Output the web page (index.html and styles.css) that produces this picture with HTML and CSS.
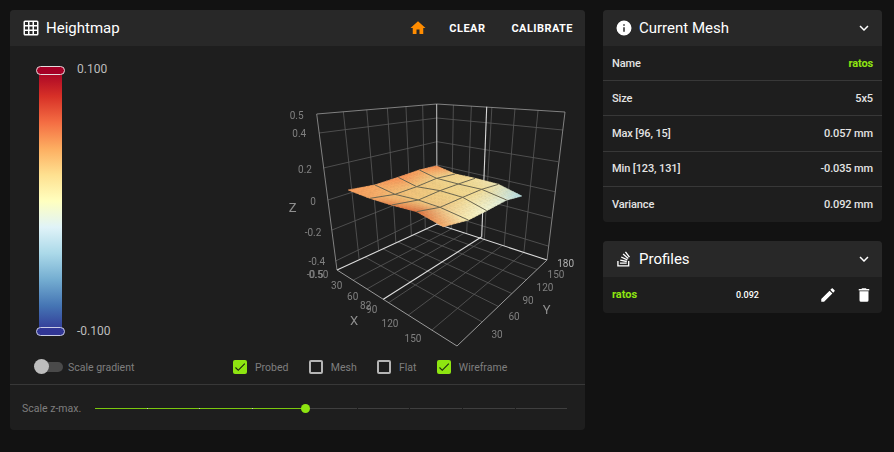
FILE: index.html
```html
<!DOCTYPE html>
<html lang="en">

<head>
  <meta charset="UTF-8">
  <meta name="viewport" content="width=device-width, initial-scale=1.0">
  <title>Heightmap</title>
  <link rel="stylesheet" href="styles.css">
</head>

<body>
  <div class="page">
    <div class="card card-main">
      <div class="card-head">
        <svg class="icon" viewBox="0 0 24 24"><path d="M10,4V8H14V4H10M16,4V8H20V4H16M16,10V14H20V10H16M16,16V20H20V16H16M14,20V16H10V20H14M8,20V16H4V20H8M8,14V10H4V14H8M8,8V4H4V8H8M10,14H14V10H10V14M4,2H20A2,2 0 0,1 22,4V20A2,2 0 0,1 20,22H4C2.92,22 2,21.1 2,20V4A2,2 0 0,1 4,2Z"/></svg>
        <span class="card-title">Heightmap</span>
        <svg class="icon icon-home" viewBox="0 0 24 24"><path d="M10,20V14H14V20H19V12H22L12,3L2,12H5V20H10Z"/></svg>
        <span class="head-btn btn-clear">CLEAR</span>
        <span class="head-btn btn-calibrate">CALIBRATE</span>
      </div>

      <div class="chart-row">
        <div class="legend">
          <div class="bar">
            <div class="handle handle-top"></div>
            <div class="handle handle-bottom"></div>
          </div>
          <div class="legend-labels">
            <span>0.100</span>
            <span>-0.100</span>
          </div>
        </div>
        <svg id="plot" class="plot" viewBox="280 90 300 260"></svg>
      </div>

      <div class="controls">
        <div class="toggle-wrap">
          <div class="toggle"><div class="toggle-thumb"></div></div>
          <span class="control-label">Scale gradient</span>
        </div>
        <div class="checks">
          <div class="check-item">
            <div class="check on"><svg viewBox="0 0 24 24"><path d="M21,7L9,19L3.5,13.5L4.91,12.09L9,16.17L19.59,5.59L21,7Z"/></svg></div>
            <span class="control-label">Probed</span>
          </div>
          <div class="check-item">
            <div class="check"></div>
            <span class="control-label">Mesh</span>
          </div>
          <div class="check-item">
            <div class="check"></div>
            <span class="control-label">Flat</span>
          </div>
          <div class="check-item">
            <div class="check on"><svg viewBox="0 0 24 24"><path d="M21,7L9,19L3.5,13.5L4.91,12.09L9,16.17L19.59,5.59L21,7Z"/></svg></div>
            <span class="control-label">Wireframe</span>
          </div>
        </div>
      </div>

      <div class="slider-row">
        <span class="control-label slider-label">Scale z-max.</span>
        <div class="slider">
          <div class="slider-seg active"></div>
          <div class="slider-seg active"></div>
          <div class="slider-seg active"></div>
          <div class="slider-seg active"></div>
          <div class="slider-seg"></div>
          <div class="slider-seg"></div>
          <div class="slider-seg"></div>
          <div class="slider-seg"></div>
          <div class="slider-seg"></div>
          <div class="slider-thumb"></div>
        </div>
      </div>
    </div>

    <div class="side">
      <div class="card">
        <div class="card-head">
          <svg class="icon" viewBox="0 0 24 24"><path d="M13,9H11V7H13M13,17H11V11H13M12,2A10,10 0 0,0 2,12A10,10 0 0,0 12,22A10,10 0 0,0 22,12A10,10 0 0,0 12,2Z"/></svg>
          <span class="card-title">Current Mesh</span>
          <svg class="icon icon-chevron" viewBox="0 0 24 24"><path d="M7.41,8.58L12,13.17L16.59,8.58L18,10L12,16L6,10L7.41,8.58Z"/></svg>
        </div>
        <div class="info-row"><span>Name</span><span class="green">ratos</span></div>
        <div class="info-row"><span>Size</span><span>5x5</span></div>
        <div class="info-row"><span>Max [96, 15]</span><span>0.057 mm</span></div>
        <div class="info-row"><span>Min [123, 131]</span><span>-0.035 mm</span></div>
        <div class="info-row"><span>Variance</span><span>0.092 mm</span></div>
      </div>

      <div class="card">
        <div class="card-head">
          <svg class="icon" viewBox="0 0 24 24"><path d="M17.36,20.2V14.82H19.15V22H3V14.82H4.8V20.2H17.36M6.77,14.32L7.14,12.56L15.93,14.41L15.56,16.17L6.77,14.32M7.93,10.11L8.69,8.5L16.83,12.28L16.07,13.9L7.93,10.11M10.19,6.12L11.34,4.74L18.24,10.5L17.09,11.87L10.19,6.12M14.64,1.87L20,9.08L18.56,10.15L13.2,2.94L14.64,1.87M6.59,18.41V16.61H15.57V18.41H6.59Z"/></svg>
          <span class="card-title">Profiles</span>
          <svg class="icon icon-chevron" viewBox="0 0 24 24"><path d="M7.41,8.58L12,13.17L16.59,8.58L18,10L12,16L6,10L7.41,8.58Z"/></svg>
        </div>
        <div class="profile-row">
          <span class="green profile-name">ratos</span>
          <span class="profile-value">0.092</span>
          <svg class="icon icon-edit" viewBox="0 0 24 24"><path d="M20.71,7.04C21.1,6.65 21.1,6 20.71,5.63L18.37,3.29C18,2.9 17.35,2.9 16.96,3.29L15.12,5.12L18.87,8.87M3,17.25V21H6.75L17.81,9.93L14.06,6.18L3,17.25Z"/></svg>
          <svg class="icon icon-delete" viewBox="0 0 24 24"><path d="M19,4H15.5L14.5,3H9.5L8.5,4H5V6H19M6,19A2,2 0 0,0 8,21H16A2,2 0 0,0 18,19V7H6V19Z"/></svg>
        </div>
      </div>
    </div>
  </div>

  <script src="plot.js"></script>
</body>

</html>
```

FILE: styles.css
```css
* {
  box-sizing: border-box;
}

html,
body {
  margin: 0;
  height: 100%;
  overflow: hidden;
  background: #121212;
  font-family: Roboto, "Liberation Sans", sans-serif;
  color: #fff;
}

.page {
  display: flex;
  gap: 18px;
  padding: 10px 12px 0 10px;
}

.card {
  background: #1e1e1e;
  border-radius: 4px;
  overflow: hidden;
}

.card-main {
  width: 575px;
  height: 420px;
}

.side {
  display: flex;
  flex-direction: column;
  gap: 19px;
  width: 279px;
}

.card-head {
  display: flex;
  align-items: center;
  height: 36px;
  padding: 0 12px;
  background: #282828;
}

.icon {
  flex: none;
  width: 18px;
  height: 18px;
  fill: #fff;
}

.card-title {
  margin-left: 6px;
  font-size: 15px;
}

.icon-home {
  margin-left: auto;
  fill: #ff8c00;
}

.head-btn {
  font-size: 11px;
  font-weight: 700;
  letter-spacing: 0.45px;
}

.btn-clear {
  margin-left: 22px;
}

.btn-calibrate {
  margin-left: 26px;
}

.icon-chevron {
  margin-left: auto;
  margin-right: -3px;
}

/* chart */

.chart-row {
  display: flex;
  height: 306px;
}

.legend {
  display: flex;
  height: 276px;
  margin: 16px 0 0 29px;
}

.bar {
  position: relative;
  width: 23px;
  height: 262px;
  margin-top: 8px;
  background: linear-gradient(#a50026, #d73027, #f46d43, #fdae61, #fee090, #ffffbf, #e0f3f8, #abd9e9, #74add1, #4575b4, #313695);
}

.handle {
  position: absolute;
  left: -3px;
  width: 29px;
  height: 9px;
  border: 1px solid #e6d9dc;
  border-radius: 5px;
}

.handle-top {
  top: -4px;
  background: #a50026;
}

.handle-bottom {
  bottom: -4px;
  background: #313695;
  border-color: #c9cce6;
}

.legend-labels {
  display: flex;
  flex-direction: column;
  justify-content: space-between;
  margin-left: 15px;
  font-size: 12px;
  line-height: 14px;
  color: #bdbdbd;
}

.plot {
  flex: none;
  width: 300px;
  height: 260px;
  margin: 44px 5px 0 auto;
  filter: blur(0.35px);
}

/* controls */

.controls {
  display: flex;
  align-items: center;
  height: 33px;
  padding: 0 0 2px 25px;
  border-bottom: 1px solid #383838;
}

.toggle-wrap {
  display: flex;
  align-items: center;
  width: 198px;
}

.toggle {
  position: relative;
  width: 28px;
  height: 10px;
  border-radius: 5px;
  background: #4a4a4a;
}

.toggle-thumb {
  position: absolute;
  top: -3px;
  left: -1px;
  width: 15px;
  height: 15px;
  border-radius: 50%;
  background: #bdbdbd;
}

.control-label {
  font-size: 10.5px;
  color: #7f7f7f;
}

.toggle-wrap .control-label {
  margin-left: 5px;
}

.checks {
  display: flex;
  gap: 20.3px;
}

.check-item {
  display: flex;
  align-items: center;
  gap: 8px;
}

.check {
  width: 14px;
  height: 14px;
  border: 2px solid #b5b5b5;
  border-radius: 2px;
}

.check.on {
  border: 0;
  background: #8ee511;
}

.check svg {
  display: block;
  width: 14px;
  height: 14px;
  fill: #1e2a10;
}

.slider-row {
  display: flex;
  align-items: center;
  height: 46px;
  padding-left: 12px;
}

.slider-label {
  width: 73px;
}

.slider {
  position: relative;
  display: flex;
  gap: 1px;
  width: 472px;
}

.slider-seg {
  flex: 1;
  height: 1px;
  background: #3f3f3f;
}

.slider-seg.active {
  background: #7ac70e;
  box-shadow: 1px 0 0 #c8d8a8;
}

.slider-thumb {
  position: absolute;
  top: -4px;
  left: 206px;
  width: 9px;
  height: 9px;
  border-radius: 50%;
  background: #8ee511;
}

/* side cards */

.info-row {
  display: flex;
  justify-content: space-between;
  align-items: center;
  height: 35.2px;
  padding: 0 9px;
  font-size: 11px;
  font-weight: 500;
  letter-spacing: -0.12px;
  color: #e4e4e4;
  border-bottom: 1px solid #383838;
}

.info-row:last-child {
  border-bottom: 0;
}

.green {
  color: #8ee511;
  font-weight: 700;
}

.profile-row {
  display: flex;
  align-items: center;
  height: 36px;
  padding: 0 9px;
  font-size: 11px;
}

.profile-name {
  width: 124px;
}

.profile-value {
  width: 83px;
  font-size: 9px;
  font-weight: 500;
}

.icon-delete {
  margin-left: 18px;
}
```

FILE: plot.js
```js
// hand-placed 3d projection of the mesh plot, coordinates are page px
const svg = document.querySelector('#plot')
const NS = 'http://www.w3.org/2000/svg'

const add = (tag, attrs, text) => {
  const el = document.createElementNS(NS, tag)
  Object.keys(attrs).forEach(k => el.setAttribute(k, attrs[k]))
  if (text) el.textContent = text
  svg.appendChild(el)
  return el
}

const line = (a, b, color, width) => add('line', {
  x1: a[0], y1: a[1], x2: b[0], y2: b[1], stroke: color, 'stroke-width': width || 0.8
})

const mix = (a, b, t) => [a[0] + (b[0] - a[0]) * t, a[1] + (b[1] - a[1]) * t]

const GRID = '#5a5a5a'
const AXIS = '#9a9a9a'

const topL = [316.7, 114], topB = [436.7, 104], topR = [565, 112]
const floorL = [337, 270], floorB = [437, 224], floorR = [547, 260], floorF = [457, 346]

// walls, vertical lines
const leftFr = [0.222, 0.417, 0.589, 0.744, 0.883]
leftFr.forEach(f => line(mix(topL, topB, f), mix(floorL, floorB, f), GRID))
const rightFr = [0.13, 0.27, 0.43, 0.61, 0.79]
rightFr.forEach(f => line(mix(topB, topR, f), mix(floorB, floorR, f), GRID))

// walls, z lines
const zLines = [
  [[319, 133], [437, 118], [563, 130]],
  [[323.5, 168], [437, 141.7], [558, 161.7]],
  [[328, 200], [437, 165], [555, 191.7]],
  [[332, 230], [437, 188], [551, 218]],
  [[335.5, 261], [437, 212], [548, 246]]
]
zLines.forEach(p => {
  line(p[0], p[1], GRID)
  line(p[1], p[2], GRID)
})

// floor
const frontFr = [0.134, 0.25, 0.43, 0.594, 0.79]
frontFr.forEach(f => line(mix(floorL, floorF, f), mix(floorB, floorR, f), GRID))
const sideFr = [0.28, 0.46, 0.61, 0.77, 0.89]
sideFr.forEach(f => line(mix(floorF, floorR, f), mix(floorL, floorB, f), GRID))

// box edges
line(topL, topB, AXIS)
line(topB, topR, AXIS)
line(topL, floorL, AXIS)
line(topR, floorR, AXIS)
line(topB, floorB, '#c8c8c8', 1)
line(floorL, floorB, '#dcdcdc', 1.1)
line(floorB, floorR, '#dcdcdc', 1.1)
line(floorL, floorF, AXIS, 1)
line(floorF, floorR, AXIS, 1)

// crosshair at x=82
line([486.7, 106.7], [481.7, 236.7], '#d8d8d8', 1.1)
line([481.7, 236.7], [383.3, 299.3], '#e0e0e0', 1.1)

// surface, zoom coordinates of the vertices converted to page px
const pts = [
  [[205, 300], [270, 325], [335, 345], [410, 365], [490, 410]],
  [[285, 285], [345, 313], [415, 330], [480, 352], [565, 390]],
  [[355, 262], [410, 290], [480, 302], [548, 322], [620, 362]],
  [[418, 240], [470, 265], [535, 282], [605, 298], [680, 330]],
  [[470, 228], [525, 252], [585, 265], [655, 283], [725, 318]]
].map(r => r.map(p => [280 + p[0] / 3, 90 + p[1] / 3]))

const cols = [
  ['#fa9e5d', '#f6a664', '#ea874f', '#dc7040', '#f5ab68'],
  ['#f9a662', '#f3bd76', '#f0c87e', '#eec585', '#f8efb6'],
  ['#f88f55', '#f2c67c', '#f0cf85', '#f2d88f', '#f3f5d2'],
  ['#f9a05d', '#efd08a', '#f1d88f', '#f2dc96', '#dcecdc'],
  ['#f68c52', '#f4d18a', '#f4de9b', '#f0e8b8', '#b4dce4']
].map(r => r.map(c => [1, 3, 5].map(i => parseInt(c.substr(i, 2), 16))))

const STEPS = 6
for (let i = 0; i < 4; i++) {
  for (let j = 0; j < 4; j++) {
    for (let u = 0; u < STEPS; u++) {
      for (let v = 0; v < STEPS; v++) {
        const at = (s, t) => {
          const a = mix(pts[i][j], pts[i + 1][j], s)
          const b = mix(pts[i][j + 1], pts[i + 1][j + 1], s)
          return mix(a, b, t)
        }
        const s0 = u / STEPS, s1 = (u + 1) / STEPS, t0 = v / STEPS, t1 = (v + 1) / STEPS
        const sm = (s0 + s1) / 2, tm = (t0 + t1) / 2
        const rgb = [0, 1, 2].map(k => {
          const a = cols[i][j][k] + (cols[i + 1][j][k] - cols[i][j][k]) * sm
          const b = cols[i][j + 1][k] + (cols[i + 1][j + 1][k] - cols[i][j + 1][k]) * sm
          return Math.round(a + (b - a) * tm)
        })
        const color = `rgb(${rgb.join(',')})`
        add('polygon', {
          points: [at(s0, t0), at(s1, t0), at(s1, t1), at(s0, t1)].map(p => p.join(',')).join(' '),
          fill: color,
          stroke: color,
          'stroke-width': 0.7
        })
      }
    }
  }
}

// wireframe, only inner lines are drawn in the reference
const WIRE = '#6b6650'
for (let i = 1; i < 4; i++) {
  for (let j = 0; j < 4; j++) {
    line(pts[i][j], pts[i][j + 1], WIRE, 1)
    line(pts[j][i], pts[j + 1][i], WIRE, 1)
  }
}

// tick labels, x/y is the middle of the text
const label = (x, y, text, fill) => add('text', {
  x, y: y + 3.5, 'text-anchor': 'middle',
  fill: fill || '#808080', 'font-size': 10, 'font-family': 'Roboto, sans-serif'
}, text)

const bigLabel = (x, y, text) => add('text', {
  x, y: y + 4.5, 'text-anchor': 'middle', fill: '#8f8f8f', 'font-size': 13, 'font-family': 'Roboto, sans-serif'
}, text)

label(296.7, 115, '0.5')
label(299.3, 133, '0.4')
label(305, 169, '0.2')
label(313, 201.7, '0')
label(313, 232.7, '-0.2')
label(316.7, 261.7, '-0.4')
label(315, 274.3, '-0.5')
label(318.5, 274.3, '0.50')

label(336.7, 285, '30')
label(352.7, 296.7, '60')
label(365.7, 305, '82')
label(371.7, 309, '90')
label(390, 323, '120')
label(413, 338, '150')

label(565.7, 263, '180', '#b0b0b0')
label(556, 274, '150')
label(545, 287, '120')
label(528, 300, '90')
label(514, 316, '60')
label(497, 334, '30')

bigLabel(292.7, 207, 'Z')
bigLabel(354, 320.7, 'X')
bigLabel(546.7, 309, 'Y')
```
